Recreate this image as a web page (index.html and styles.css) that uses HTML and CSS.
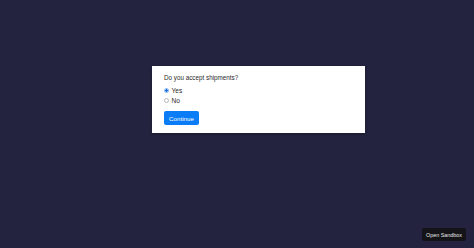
FILE: index.html
```html
<!DOCTYPE html>
<html lang="en">
<head>
<meta charset="utf-8">
<title>Shipments</title>
<link rel="stylesheet" href="styles.css">
</head>
<body>
<main class="stage">
  <form class="card">
    <p class="question">Do you accept shipments?</p>
    <label class="option"><input type="radio" name="ship" value="yes" checked><span>Yes</span></label>
    <label class="option"><input type="radio" name="ship" value="no"><span>No</span></label>
    <button type="button" class="continue">Continue</button>
  </form>
</main>
<button type="button" class="sandbox">Open Sandbox</button>
</body>
</html>
```

FILE: styles.css
```css
html, body {
  margin: 0;
  height: 100%;
}
body {
  background: #23233f;
  font-family: "Liberation Sans", Arial, sans-serif;
  color: #2a2a2a;
}
.stage {
  padding: 66px 0 0 152px;
}
.card {
  box-sizing: border-box;
  width: 213px;
  background: #ffffff;
  padding: 7px 12px 8px;
  display: flex;
  flex-direction: column;
  align-items: flex-start;
  box-shadow: 0 1px 3px rgba(0, 0, 0, 0.3);
}
.question {
  margin: 0 0 3px;
  font-size: 6.3px;
  line-height: 9px;
}
.option {
  display: flex;
  align-items: center;
  height: 10px;
  font-size: 6.6px;
}
.option input {
  -webkit-appearance: none;
  appearance: none;
  box-sizing: border-box;
  margin: 0 2.5px 0 0;
  width: 5px;
  height: 5px;
  border-radius: 50%;
  border: 0.6px solid #b8b8b8;
  background: #ffffff;
}
.option input:checked {
  border-color: #7fb0f0;
  background: radial-gradient(circle, #1a6fe0 0 55%, #cfe2fb 65%);
}
.continue {
  margin-top: 6px;
  background: #0a7cf5;
  color: #ffffff;
  border: 0;
  border-radius: 2px;
  font-family: "Liberation Sans", Arial, sans-serif;
  font-size: 6.2px;
  width: 35px;
  height: 14px;
  padding: 0;
}
.sandbox {
  position: fixed;
  right: 8px;
  bottom: 7px;
  background: #141418;
  color: #e8e8e8;
  border: 0;
  border-radius: 2px;
  font-family: "Liberation Sans", Arial, sans-serif;
  font-size: 5.4px;
  width: 44px;
  height: 13px;
  padding: 0;
}
```
